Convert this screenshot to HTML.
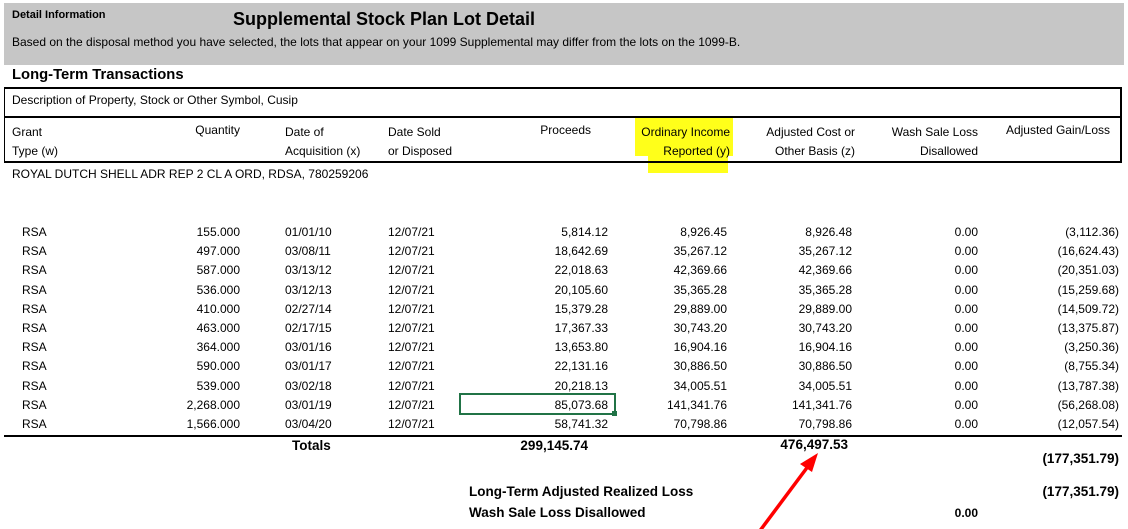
<!DOCTYPE html>
<html><head><style>
body{margin:0;width:1128px;height:529px;background:#fff;position:relative;overflow:hidden;font-family:"Liberation Sans",Arial,sans-serif;color:#000;}
.a{position:absolute;white-space:nowrap;font-size:12px;line-height:14px;}
.r{text-align:right;}
.b{font-weight:bold;}
.t{font-size:13.5px;line-height:16px;}
.h{position:absolute;background:#000;}
</style></head><body>
<div style="position:absolute;left:4px;top:3px;width:1120px;height:62px;background:#c6c6c6;"></div>
<div class="a b" style="left:12px;top:8px;font-size:11px;">Detail Information</div>
<div class="a b" style="left:233px;top:9px;font-size:18px;line-height:20px;">Supplemental Stock Plan Lot Detail</div>
<div class="a" style="left:12px;top:35px;">Based on the disposal method you have selected, the lots that appear on your 1099 Supplemental may differ from the lots on the 1099-B.</div>
<div class="a b" style="left:12px;top:67px;font-size:14.8px;line-height:17px;">Long-Term Transactions</div>
<div class="h" style="left:4px;top:87px;width:1118px;height:2px;"></div>
<div class="h" style="left:4px;top:87px;width:1px;height:75px;"></div>
<div class="h" style="left:1120px;top:87px;width:2px;height:75px;"></div>
<div class="a" style="left:12px;top:93px;">Description of Property, Stock or Other Symbol, Cusip</div>
<div class="h" style="left:4px;top:116px;width:1118px;height:2px;"></div>
<div style="position:absolute;left:635px;top:118px;width:98px;height:38px;background:#ffff1a;"></div>
<div style="position:absolute;left:648px;top:155px;width:80px;height:18px;background:#ffff1a;"></div>
<div class="a" style="left:12px;top:123px;line-height:19px;">Grant<br>Type (w)</div>
<div class="a r" style="left:140px;width:100px;top:123px;">Quantity</div>
<div class="a" style="left:285px;top:123px;line-height:19px;">Date of<br>Acquisition (x)</div>
<div class="a" style="left:388px;top:123px;line-height:19px;">Date Sold<br>or Disposed</div>
<div class="a r" style="left:490px;width:101px;top:123px;">Proceeds</div>
<div class="a r" style="left:600px;width:130px;top:123px;line-height:19px;">Ordinary Income<br>Reported (y)</div>
<div class="a r" style="left:700px;width:155px;top:123px;line-height:19px;">Adjusted Cost or<br>Other Basis (z)</div>
<div class="a r" style="left:820px;width:158px;top:123px;line-height:19px;">Wash Sale Loss<br>Disallowed</div>
<div class="a r" style="left:960px;width:150px;top:123px;">Adjusted Gain/Loss</div>
<div class="h" style="left:4px;top:161px;width:1118px;height:2px;"></div>
<div class="a" style="left:12px;top:167px;">ROYAL DUTCH SHELL ADR REP 2 CL A ORD, RDSA, 780259206</div>
<div style="position:absolute;left:459px;top:393px;width:157px;height:22px;border:2px solid #217346;box-sizing:border-box;"></div>
<div style="position:absolute;left:612px;top:411px;width:5px;height:5px;background:#217346;"></div>
<div id="rows"></div>
<div class="h" style="left:4px;top:435px;width:1118px;height:2px;"></div>
<div class="a b t" style="left:292px;top:438px;">Totals</div>
<div class="a b t r" style="left:480px;width:108px;top:438px;">299,145.74</div>
<div class="a b t r" style="left:740px;width:108px;top:437px;">476,497.53</div>
<div class="a b t r" style="left:1000px;width:119px;top:451px;">(177,351.79)</div>
<div class="a b t" style="left:469px;top:484px;">Long-Term Adjusted Realized Loss</div>
<div class="a b t r" style="left:1000px;width:119px;top:484px;">(177,351.79)</div>
<div class="a b t" style="left:469px;top:505px;">Wash Sale Loss Disallowed</div>
<div class="a b r" style="left:900px;width:78px;top:506px;">0.00</div>
<svg style="position:absolute;left:0;top:0" width="1128" height="529"><line x1="759" y1="532" x2="809" y2="465" stroke="#f00" stroke-width="3.5"/><polygon points="818,453 800,464 812,472" fill="#f00"/></svg>
<script>
var d=[["155.000","01/01/10","5,814.12","8,926.45","8,926.48","(3,112.36)"],["497.000","03/08/11","18,642.69","35,267.12","35,267.12","(16,624.43)"],["587.000","03/13/12","22,018.63","42,369.66","42,369.66","(20,351.03)"],["536.000","03/12/13","20,105.60","35,365.28","35,365.28","(15,259.68)"],["410.000","02/27/14","15,379.28","29,889.00","29,889.00","(14,509.72)"],["463.000","02/17/15","17,367.33","30,743.20","30,743.20","(13,375.87)"],["364.000","03/01/16","13,653.80","16,904.16","16,904.16","(3,250.36)"],["590.000","03/01/17","22,131.16","30,886.50","30,886.50","(8,755.34)"],["539.000","03/02/18","20,218.13","34,005.51","34,005.51","(13,787.38)"],["2,268.000","03/01/19","85,073.68","141,341.76","141,341.76","(56,268.08)"],["1,566.000","03/04/20","58,741.32","70,798.86","70,798.86","(12,057.54)"]];
var h="";d.forEach(function(r,i){var t=225+i*19.2;
h+='<div class="a" style="left:22px;top:'+t+'px">RSA</div>'+
'<div class="a r" style="left:140px;width:100px;top:'+t+'px">'+r[0]+'</div>'+
'<div class="a" style="left:285px;top:'+t+'px">'+r[1]+'</div>'+
'<div class="a" style="left:388px;top:'+t+'px">12/07/21</div>'+
'<div class="a r" style="left:500px;width:108px;top:'+t+'px">'+r[2]+'</div>'+
'<div class="a r" style="left:620px;width:107px;top:'+t+'px">'+r[3]+'</div>'+
'<div class="a r" style="left:740px;width:112px;top:'+t+'px">'+r[4]+'</div>'+
'<div class="a r" style="left:900px;width:78px;top:'+t+'px">0.00</div>'+
'<div class="a r" style="left:1000px;width:119px;top:'+t+'px">'+r[5]+'</div>';});
document.getElementById("rows").innerHTML=h;
</script>
</body></html>
